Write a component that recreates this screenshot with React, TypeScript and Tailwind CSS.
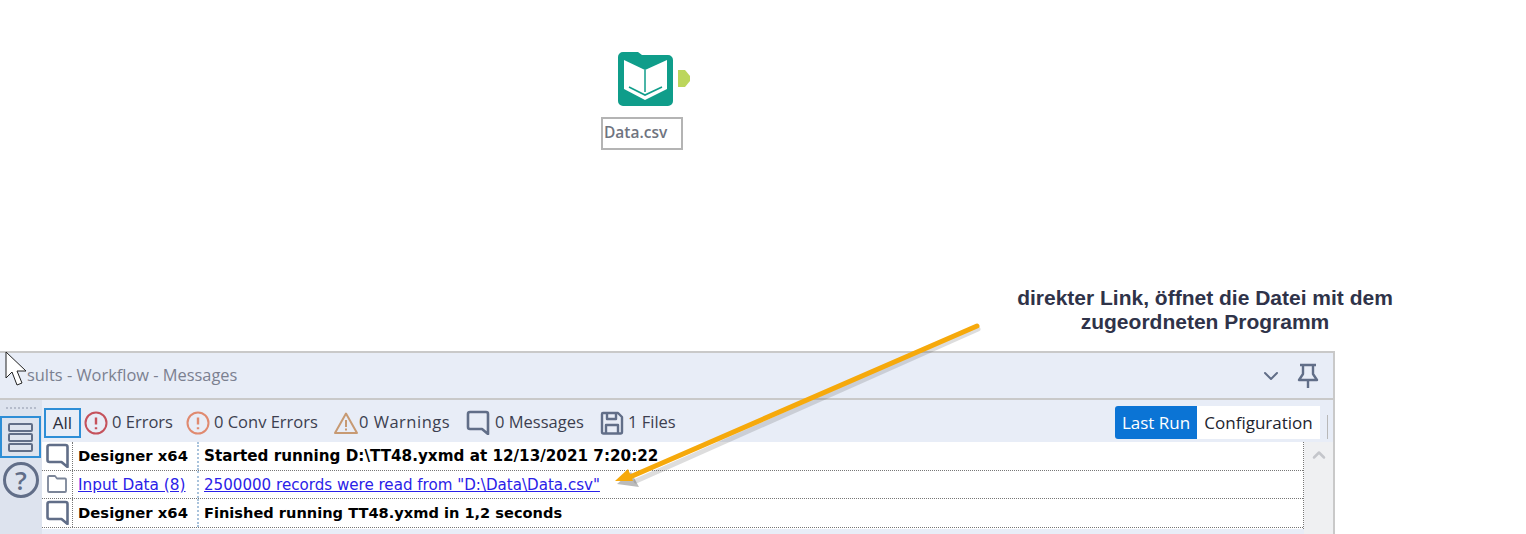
import { ChevronDown, ChevronUp } from "lucide-react";
import type { ReactNode } from "react";

const ui = "font-['Open_Sans','Noto_Sans',sans-serif]";
const mono = "font-['DejaVu_Sans',sans-serif]";

function Bubble({ className = "" }: { className?: string }) {
  return (
    <svg viewBox="0 0 24 25" className={className} fill="none" stroke="#616e88" strokeWidth="2.6">
      <path d="M4 2h16a2 2 0 0 1 2 2v20l-6-5H4a2 2 0 0 1-2-2V4a2 2 0 0 1 2-2z" strokeLinejoin="round" />
    </svg>
  );
}

function RoundAlert({ color }: { color: string }) {
  return (
    <svg viewBox="0 0 24 24" className="h-6 w-6" fill="none" stroke={color} strokeWidth="2">
      <circle cx="12" cy="12" r="10.5" />
      <path d="M12 6.5v7M12 16.2v2" strokeWidth="2.4" />
    </svg>
  );
}

function Filter({ icon, label, className }: { icon: ReactNode; label: string; className: string }) {
  return (
    <div className="flex items-center">
      {icon}
      <span className={`whitespace-nowrap text-[16.5px] text-[#3c3f50] ${className}`}>{label}</span>
    </div>
  );
}

function Row({ icon, source, text, link, textClass = "" }: { icon: ReactNode; source: string; text: string; link?: boolean; textClass?: string }) {
  const cell = link ? "font-normal text-[#2a21e8] underline" : "font-bold text-black";
  return (
    <div className="flex h-[28.6px] border-b border-dotted border-[#777]">
      <div className="flex w-[31px] shrink-0 items-center justify-center border-r border-dotted border-[#777]">{icon}</div>
      <div className={`w-[126px] shrink-0 border-r-2 border-dotted border-[#a9c3dc] pl-[5px] leading-[28px] whitespace-nowrap ${mono} ${link ? "text-[15.3px]" : "text-[14.8px]"} ${cell}`}>{source}</div>
      <div className={`pl-[5px] leading-[28px] whitespace-nowrap ${mono} ${textClass} ${cell}`}>{text}</div>
    </div>
  );
}

export default function App() {
  return (
    <div className={`relative flex h-[534px] w-[1526px] flex-col overflow-hidden bg-white ${ui}`}>
      {/* workflow canvas */}
      <div className="relative h-[351px] shrink-0">
        <div className="absolute left-[601px] top-[51px] flex w-[90px] flex-col items-start">
          <div className="flex items-center">
            <div className="ml-[17px] h-[55px] w-[55px]">
              <svg viewBox="0 0 55 55" className="h-full w-full">
                <path d="M5 1h15l4 3h26a5 5 0 0 1 5 5v41a5 5 0 0 1-5 5H5a5 5 0 0 1-5-5V6a5 5 0 0 1 5-5z" fill="#0f9d8a" />
                <path d="M6 9l21 10L49 9v29L27 49 6 38z" fill="#fff" />
                <path d="M27 19v22" stroke="#0f9d8a" strokeWidth="1.5" />
                <path d="M11 36l16 8 17-8" fill="none" stroke="#0f9d8a" strokeWidth="1.6" />
              </svg>
            </div>
            <svg viewBox="0 0 12 17" className="ml-[5px] h-[17px] w-[12px]">
              <path d="M0 0h7l5 6v5l-5 6H0z" fill="#bcd65c" />
            </svg>
          </div>
          <div className="mt-[11px] h-[33px] w-[82px] border-2 border-[#b4b4b4] pl-[1px] text-[15.5px] font-semibold leading-[26px] text-[#6f7480]">
            Data.csv
          </div>
        </div>
        <div className="absolute left-[1005px] top-[286px] w-[400px] text-center font-['Liberation_Sans',sans-serif] text-[21px] font-bold leading-[24px] text-[#2f3349]">
          direkter Link, öffnet die Datei mit dem
          <br />
          zugeordneten Programm
        </div>
      </div>

      {/* results panel */}
      <div className="flex w-[1335px] flex-1 flex-col border-r-2 border-[#c9c9c9] bg-[#e8edf7]">
        <div className="flex h-[49px] shrink-0 items-center border-y-2 border-[#c9c9c9]">
          <span className="ml-[27px] text-[16.4px] text-[#7b8090]">sults - Workflow - Messages</span>
          <ChevronDown className="ml-auto h-6 w-6 text-[#616e88]" strokeWidth={2} />
          <svg viewBox="0 0 22 26" className="ml-[14px] mr-[14px] h-[26px] w-[22px]" fill="none" stroke="#616e88" strokeWidth="2.4" strokeLinejoin="round">
            <path d="M3 2h16M6 2v9l-4 6h18l-4-6V2M11 17v8" />
          </svg>
        </div>
        <div className="flex min-h-0 flex-1">
          <div className="flex w-[42px] shrink-0 flex-col items-center bg-[#dde3ee]">
            <div className="mt-[7px] h-[3px] w-[30px] border-t-2 border-dotted border-[#b5bccb]" />
            <div className="ml-[-1px] mt-[6px] flex h-[42px] w-[41px] flex-col items-center justify-center gap-[1px] border-2 border-[#2e8ed6]">
              <span className="h-[9px] w-[25px] rounded-[2px] border-[2.5px] border-[#616e88]" />
              <span className="h-[9px] w-[25px] rounded-[2px] border-[2.5px] border-[#616e88]" />
              <span className="h-[9px] w-[25px] rounded-[2px] border-[2.5px] border-[#616e88]" />
            </div>
            <div className="mt-[4px] flex h-[36px] w-[36px] items-center justify-center rounded-full border-[3px] border-[#616e88] text-[26px] font-semibold leading-none text-[#616e88]">
              ?
            </div>
          </div>
          <div className="flex min-w-0 flex-1 flex-col">
            <div className="relative flex h-[42px] shrink-0 items-center pt-[3px]">
              <div className="ml-[2px] flex h-[30px] w-[37px] items-center justify-center border-2 border-[#2e8ed6] text-[17px] text-[#2b2d3a]">All</div>
              <div className="ml-[3px] flex items-center gap-[15px]">
                <Filter icon={<RoundAlert color="#c5525c" />} label="0 Errors" className="ml-[4px] w-[59px]" />
                <Filter icon={<RoundAlert color="#e08a70" />} label="0 Conv Errors" className="ml-[4px] w-[106px]" />
                <Filter
                  icon={
                    <svg viewBox="0 0 24 24" className="-ml-px h-6 w-6" fill="none" stroke="#c79a73" strokeWidth="2" strokeLinejoin="round">
                      <path d="M12 2.5 23 22H1z" />
                      <path d="M12 9v7M12 17.5v2" />
                    </svg>
                  }
                  label="0 Warnings"
                  className="ml-px w-[92px] tracking-[0.5px]"
                />
                <Filter icon={<Bubble className="h-[25px] w-6" />} label="0 Messages" className="ml-[5px] w-[90px]" />
                <Filter
                  icon={
                    <svg viewBox="0 0 24 24" className="h-6 w-6" fill="none" stroke="#616e88" strokeWidth="2.4" strokeLinejoin="round">
                      <path d="M3 2h15l4 4v15a1.5 1.5 0 0 1-1.5 1.5h-17A1.5 1.5 0 0 1 2 21V3a1 1 0 0 1 1-1z" />
                      <path d="M7 2v6h9V2M6 22.5V14h12v8.5" />
                    </svg>
                  }
                  label="1 Files"
                  className="ml-[4px] w-[49px]"
                />
              </div>
              <div className="ml-auto mr-[13px] flex h-[33px] text-[17px]">
                <div className="flex w-[82px] items-center justify-center rounded-l-[3px] bg-[#0b74d5] text-white">Last Run</div>
                <div className="flex w-[123px] items-center justify-center bg-white text-[#22242f]">Configuration</div>
              </div>
              <div className="absolute right-[5px] top-[15px] h-[24px] w-px bg-[#b8b8b8]" />
            </div>
            <div className="flex min-h-0 flex-1">
              <div className="h-[87px] w-[1262px] border-r border-dotted border-[#777] bg-white">
                <Row icon={<Bubble className="h-[25px] w-[25px]" />} source="Designer x64" text="Started running D:\TT48.yxmd at 12/13/2021 7:20:22" textClass="text-[15.2px]" />
                <Row
                  icon={
                    <svg viewBox="0 0 20 18" className="h-[18px] w-[20px]" fill="none" stroke="#7b8598" strokeWidth="1.8" strokeLinejoin="round">
                      <path d="M2 1h6l2 2.5h8a1 1 0 0 1 1 1V16a1 1 0 0 1-1 1H2a1 1 0 0 1-1-1V2a1 1 0 0 1 1-1z" />
                    </svg>
                  }
                  source="Input Data (8)"
                  text={'2500000 records were read from "D:\\Data\\Data.csv"'}
                  textClass="text-[15.1px]"
                  link
                />
                <Row icon={<Bubble className="h-[25px] w-[25px]" />} source="Designer x64" text="Finished running TT48.yxmd in 1,2 seconds" textClass="text-[14.6px]" />
              </div>
              <div className="flex flex-1 justify-center bg-[#eff0f2] pt-[3px]">
                <ChevronUp className="h-5 w-5 text-[#c4c6cb]" strokeWidth={3} />
              </div>
            </div>
          </div>
        </div>
      </div>

      {/* annotation arrow */}
      <svg className="absolute left-0 top-0" width="1526" height="534" fill="none">
        <path d="M978 329 636 481" stroke="#555" strokeOpacity=".2" strokeWidth="5" strokeLinecap="round" />
        <path d="M617 484l14-12 8 15z" fill="#555" fillOpacity=".4" />
        <path d="M977 326 630 477" stroke="#f6a90b" strokeWidth="5" strokeLinecap="round" />
        <path d="M615 481l13-12 5 12z" fill="#f6a90b" />
      </svg>

      {/* mouse pointer */}
      <svg className="absolute left-[5px] top-[351px]" width="24" height="37" viewBox="0 0 24 37">
        <path d="M1 1v26l6-6 5 13 5-2-5-12h9z" fill="#fff" stroke="#222" strokeWidth="1" />
      </svg>
    </div>
  );
}
